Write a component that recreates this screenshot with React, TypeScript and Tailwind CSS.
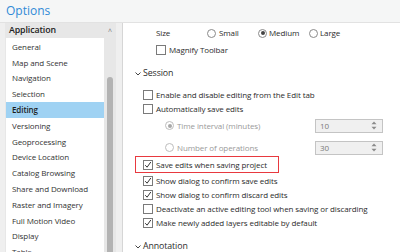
import React from 'react';

const navItems = [
  'General',
  'Map and Scene',
  'Navigation',
  'Selection',
  'Editing',
  'Versioning',
  'Geoprocessing',
  'Device Location',
  'Catalog Browsing',
  'Share and Download',
  'Raster and Imagery',
  'Full Motion Video',
  'Display',
  'Table',
];

const Check = () => (
  <svg className="w-[8px] h-[8px]" viewBox="0 0 8 8" fill="none" stroke="#333" strokeWidth={1}>
    <path d="M1.2 4.2l1.9 2 3.7-5.2" />
  </svg>
);

const Box: React.FC<{ checked?: boolean }> = ({ checked }) => (
  <span className="w-[10px] h-[10px] border border-[#7a7a7a] bg-white flex items-center justify-center shrink-0">
    {checked && <Check />}
  </span>
);

const Radio: React.FC<{ on?: boolean; disabled?: boolean }> = ({ on, disabled }) => (
  <span
    className={`w-[9px] h-[9px] rounded-full border flex items-center justify-center shrink-0 bg-white ${
      disabled ? 'border-[#bdbdbd]' : 'border-[#8a8a8a]'
    }`}
  >
    {on && <span className={`w-[4px] h-[4px] rounded-full ${disabled ? 'bg-[#a8a8a8]' : 'bg-[#444]'}`} />}
  </span>
);

const CheckRow: React.FC<{ checked?: boolean; label: string }> = ({ checked, label }) => (
  <div className="h-[14px] flex items-center gap-[3px] pl-[20px] whitespace-nowrap">
    <Box checked={checked} />
    <span>{label}</span>
  </div>
);

const Chevron = () => (
  <svg className="w-[6px] h-[4px]" viewBox="0 0 6 4" fill="none" stroke="#444" strokeWidth={1}>
    <path d="M0.5 0.5l2.5 2.5 2.5-2.5" />
  </svg>
);

const Spinner: React.FC<{ value: string }> = ({ value }) => (
  <div className="ml-auto mr-[17px] w-[68px] h-[14px] border border-[#c4c4c4] bg-[#f0f0f0] flex items-center pl-[4px] text-[#7a7a7a]">
    <span className="flex-1">{value}</span>
    <svg className="w-[6px] h-[9px] mr-[5px]" viewBox="0 0 6 9" fill="#8a8a8a">
      <path d="M3 0.5L5.5 3.2H0.5z" />
      <path d="M3 8.5L5.5 5.8H0.5z" />
    </svg>
  </div>
);

export default function App() {
  return (
    <div className="w-[400px] h-[252px] overflow-hidden bg-[#efefef] font-['Open_Sans',sans-serif] text-[8px] tracking-[-0.1px] text-[#2b2b2b] flex flex-col">
      {/* Title */}
      <div className="h-[23px] shrink-0 bg-[#f5f6f6] border-b border-[#e2e2e2] pl-[6px] pt-[1px]">
        <span className="text-[12px] tracking-normal text-[#2f8ad6] leading-[20px]">Options</span>
      </div>

      <div className="flex flex-1 min-h-0 pl-[5px] gap-[6px]">
        {/* Left nav */}
        <div className="w-[111px] shrink-0 bg-[#e7e7e7] flex flex-col">
          <div className="h-[15px] shrink-0 flex items-center pl-[4px] pr-[4px]">
            <span className="text-[8.8px] font-semibold text-[#222]">Application</span>
            <span className="ml-auto text-[7px] text-[#777] leading-none pt-[2px]">^</span>
          </div>
          <div className="flex flex-1 min-h-0">
            <div className="w-[98px] ml-[1px] bg-white pt-[1px] text-[8px] text-[#333]">
              {navItems.map((item) => (
                <div
                  key={item}
                  className={`h-[15.8px] flex items-center pl-[6px] whitespace-nowrap ${
                    item === 'Editing' ? 'bg-[#9fd2f3] font-semibold text-[#1d1d1d]' : ''
                  }`}
                >
                  {item}
                </div>
              ))}
            </div>
            <div className="flex-1 flex justify-center pt-[39px]">
              <div className="w-[6px] h-full bg-[#b3b3b3] rounded-t-[3px]" />
            </div>
          </div>
        </div>

        {/* Right content */}
        <div className="flex-1 bg-white border-l border-[#d6d6d6] pt-[3px]">
          <div className="h-[14px] flex items-center pl-[33px] whitespace-nowrap">
            <span className="w-[51px]">Size</span>
            <span className="w-[51px] flex items-center gap-[3px]">
              <Radio />
              <span>Small</span>
            </span>
            <span className="w-[51px] flex items-center gap-[2px]">
              <Radio on />
              <span>Medium</span>
            </span>
            <span className="flex items-center gap-[2px]">
              <Radio />
              <span>Large</span>
            </span>
          </div>
          <div className="h-[14px] mt-[3px] flex items-center gap-[3px] pl-[33px]">
            <Box />
            <span>Magnify Toolbar</span>
          </div>

          <div className="h-[14px] mt-[10px] flex items-center gap-[2px] pl-[12px] text-[8.8px]">
            <Chevron />
            <span>Session</span>
          </div>

          <div className="mt-[7px]">
            <CheckRow label="Enable and disable editing from the Edit tab" />
            <CheckRow label="Automatically save edits" />
          </div>

          <div className="h-[15px] mt-[2px] flex items-center pl-[42px] text-[#9a9a9a] whitespace-nowrap">
            <Radio on disabled />
            <span className="ml-[3px]">Time interval (minutes)</span>
            <Spinner value="10" />
          </div>
          <div className="h-[15px] mt-[7px] flex items-center pl-[42px] text-[#9a9a9a] whitespace-nowrap">
            <Radio disabled />
            <span className="ml-[3px]">Number of operations</span>
            <Spinner value="30" />
          </div>

          <div className="mt-[1px] ml-[12px] w-[144px] h-[17px] border-[1.5px] border-[#e8393f] flex items-center gap-[3px] pl-[7px] whitespace-nowrap">
            <Box checked />
            <span>Save edits when saving project</span>
          </div>

          <div className="mt-[1px]">
            <CheckRow checked label="Show dialog to confirm save edits" />
            <CheckRow checked label="Show dialog to confirm discard edits" />
            <CheckRow label="Deactivate an active editing tool when saving or discarding" />
            <CheckRow checked label="Make newly added layers editable by default" />
          </div>

          <div className="h-[14px] mt-[10px] flex items-center gap-[2px] pl-[12px] text-[8.8px]">
            <Chevron />
            <span>Annotation</span>
          </div>
        </div>
      </div>
    </div>
  );
}
